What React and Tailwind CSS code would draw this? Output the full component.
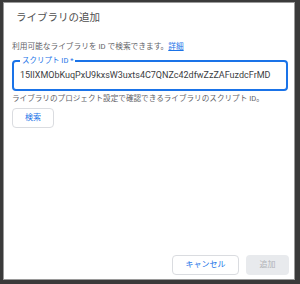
export default function App() {
  const jp = { fontFamily: 'Roboto, "Noto Sans CJK JP", sans-serif' };
  return (
    <div className="w-[300px] h-[284px] bg-[#3a3a3a] pl-[3px] pt-[2px] pr-[5px] pb-[4px]" style={jp}>
      <div className="w-full h-full bg-white border border-[#9a9a9a] flex flex-col pl-[8px] pr-[5px] pb-[4px]">
        <div className="mt-[8px] pl-[4px] text-[10.5px] leading-[14px] text-[#505050]">ライブラリの追加</div>
        <div className="mt-[17px] text-[7.7px] leading-[10px] text-[#5f6368] whitespace-nowrap">
          利用可能なライブラリを ID で検索できます。<span className="text-[#1a73e8] underline">詳細</span>
        </div>
        <div className="relative mt-[8px] mr-[1px] h-[31px] border-2 border-[#1a73e8] rounded-[4px] flex items-center pl-[6px]">
          <span className="absolute left-[6px] top-[-6px] bg-white px-[2px] text-[7.5px] leading-[9px] text-[#1a73e8]">スクリプト ID *</span>
          <span className="text-[9px] text-[#3c4043] whitespace-nowrap">15IlXMObKuqPxU9kxsW3uxts4C7QNZc42dfwZzZAFuzdcFrMD</span>
        </div>
        <div className="mt-[3px] text-[7.6px] leading-[10px] text-[#5f6368] whitespace-nowrap">ライブラリのプロジェクト設定で確認できるライブラリのスクリプト ID。</div>
        <div className="mt-[4px]">
          <button className="w-[42px] h-[20px] border border-[#dadce0] rounded-[4px] text-[8px] text-[#1a73e8] flex items-center justify-center">検索</button>
        </div>
        <div className="mt-auto flex justify-end gap-[7px]">
          <button className="w-[67px] h-[20px] border border-[#dadce0] rounded-[4px] text-[8px] text-[#1a73e8] flex items-center justify-center">キャンセル</button>
          <button className="w-[43px] h-[20px] bg-[#e8eaed] rounded-[4px] text-[8px] text-[#b0b3b8] flex items-center justify-center">追加</button>
        </div>
      </div>
    </div>
  );
}
